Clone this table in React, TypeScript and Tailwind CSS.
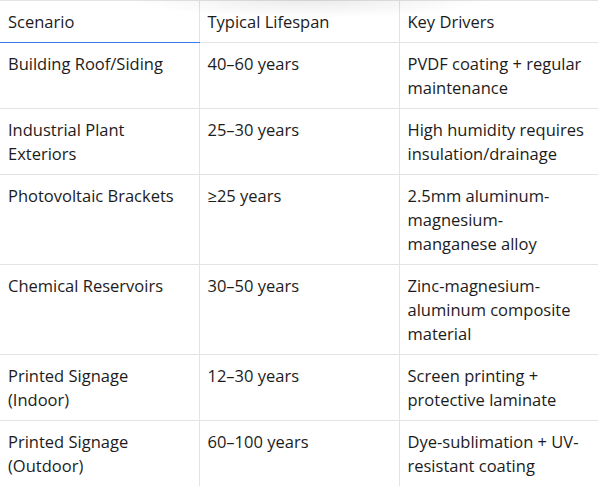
import type { ReactNode } from 'react'

const ROWS: [string, string, ReactNode][] = [
  ['Building Roof/Siding', '40–60 years', 'PVDF coating + regular maintenance'],
  ['Industrial Plant Exteriors', '25–30 years', 'High humidity requires insulation/drainage'],
  [
    'Photovoltaic Brackets',
    '≥25 years',
    <>
      2.5mm aluminum-
      <br />
      magnesium-
      <br />
      manganese alloy
    </>,
  ],
  ['Chemical Reservoirs', '30–50 years', 'Zinc-magnesium-aluminum composite material'],
  ['Printed Signage (Indoor)', '12–30 years', 'Screen printing + protective laminate'],
  ['Printed Signage (Outdoor)', '60–100 years', 'Dye-sublimation + UV-resistant coating'],
]

export default function App() {
  return (
    <div className="relative h-[486px] w-[598px] overflow-hidden bg-white font-['Open_Sans',sans-serif] text-[16.5px] leading-6 text-[#1c1c1c]">
      <div className="pointer-events-none absolute top-0 left-[130px] h-[18px] w-[360px] bg-[radial-gradient(ellipse_at_top,rgba(0,0,0,0.08),transparent_70%)]" />
      <table className="w-[600px] table-fixed border-collapse border-t border-[#e3e3e3]">
        <colgroup>
          <col className="w-[199px]" />
          <col className="w-[200px]" />
          <col className="w-[201px]" />
        </colgroup>
        <thead>
          <tr>
            <th className="border-b border-b-[#3b7cf0] px-2 pt-[9px] pb-2 text-left font-normal">Scenario</th>
            <th className="border-b border-l border-[#e3e3e3] px-2 pt-[9px] pb-2 text-left font-normal">
              Typical Lifespan
            </th>
            <th className="border-b border-l border-[#e3e3e3] px-2 pt-[9px] pb-2 text-left font-normal">
              Key Drivers
            </th>
          </tr>
        </thead>
        <tbody>
          {ROWS.map(([a, b, c]) => (
            <tr key={a} className="align-top">
              <td className="border-b border-[#e3e3e3] px-2 pt-[9px] pb-2">{a}</td>
              <td className="border-b border-l border-[#e3e3e3] px-2 pt-[9px] pb-2">{b}</td>
              <td className="border-b border-l border-[#e3e3e3] px-2 pt-[9px] pb-2">{c}</td>
            </tr>
          ))}
        </tbody>
      </table>
    </div>
  )
}
